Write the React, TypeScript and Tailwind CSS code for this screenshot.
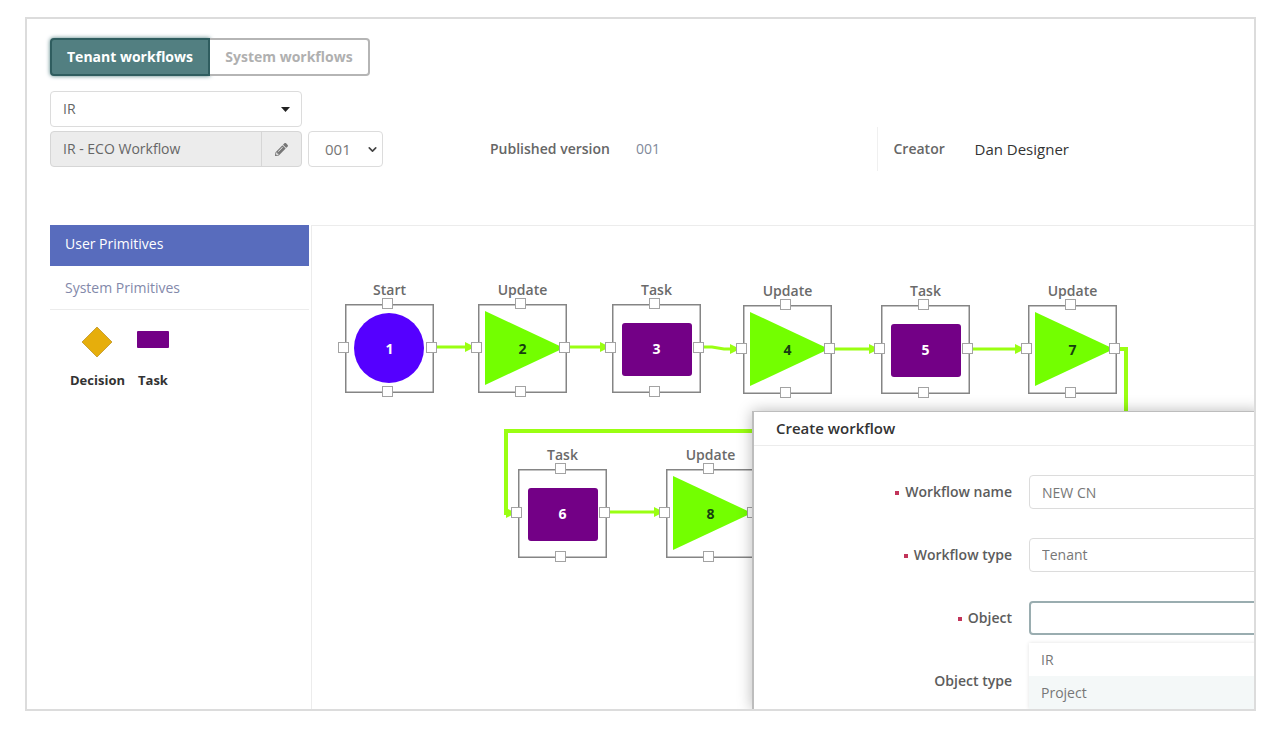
import { useState } from 'react';
import { FaPencilAlt } from 'react-icons/fa';
import { FiChevronDown } from 'react-icons/fi';

type NodeKind = 'start' | 'update' | 'task';

type FlowNode = {
  id: number;
  kind: NodeKind;
  label: string;
  x: number;
  y: number;
};

// Node positions on the canvas
const nodes: FlowNode[] = [
  { id: 1, kind: 'start', label: 'Start', x: 33, y: 78 },
  { id: 2, kind: 'update', label: 'Update', x: 166, y: 78 },
  { id: 3, kind: 'task', label: 'Task', x: 300, y: 78 },
  { id: 4, kind: 'update', label: 'Update', x: 431, y: 79 },
  { id: 5, kind: 'task', label: 'Task', x: 569, y: 79 },
  { id: 7, kind: 'update', label: 'Update', x: 716, y: 79 },
  { id: 6, kind: 'task', label: 'Task', x: 206, y: 243 },
  { id: 8, kind: 'update', label: 'Update', x: 354, y: 243 },
];

const edges = [
  'M119 121 H162',
  'M253 121 H296',
  'M386 121 H400 L412 123 H426',
  'M517 123 H565',
  'M655 123 H711',
  'M292 286 H349',
];

const arrows = [
  [163, 121],
  [298, 121],
  [428, 123],
  [567, 123],
  [713, 123],
  [204, 287],
  [352, 286],
];

const handles = [
  [42, -1],
  [-2, 43],
  [86, 43],
  [42, 87],
];

const NodeShape = ({ kind }: { kind: NodeKind }) => {
  if (kind === 'start') return <circle cx="44" cy="44" r="35" fill="#5500ff" />;
  if (kind === 'update') return <path d="M7 7 L86 44 L7 81 Z" fill="#73ff00" />;
  return <rect x="10" y="19" width="70" height="53" rx="3" fill="#730086" />;
};

const CanvasNode = ({ node }: { node: FlowNode }) => (
  <div className="absolute size-[89px]" style={{ left: node.x, top: node.y }}>
    <svg className="absolute inset-0 overflow-visible" width="89" height="89" aria-hidden="true">
      <rect x="0.75" y="0.75" width="87.5" height="87.5" fill="none" stroke="#858585" strokeWidth="1.5" />
      <NodeShape kind={node.kind} />
      {handles.map(([x, y]) => (
        <rect key={`${x}-${y}`} x={x - 4.5} y={y - 4.5} width="10" height="10" fill="#fff" stroke="#a3a3a3" />
      ))}
    </svg>
    <span className="absolute inset-x-0 -top-6 text-center text-sm font-semibold leading-5 text-[#6a6a6a]">
      {node.label}
    </span>
    <span
      className={`absolute inset-0 flex items-center justify-center text-sm font-bold ${
        node.kind === 'update' ? 'text-[#163f10]' : 'text-white'
      }`}
    >
      {node.id}
    </span>
  </div>
);

const Canvas = () => (
  <section aria-label="Workflow canvas" className="relative min-w-0 flex-1 overflow-hidden border-l border-t border-[#ececec]">
    <svg className="absolute inset-0 size-full" fill="none" aria-hidden="true">
      <g stroke="#9aff12" strokeWidth="3">
        {edges.map((d) => (
          <path key={d} d={d} />
        ))}
        <path d="M802 123 H814 V205 H194 V287 H200" strokeWidth="4" />
      </g>
      {arrows.map(([x, y]) => (
        <path key={`${x}-${y}`} d={`M${x - 10} ${y - 5} L${x} ${y} L${x - 10} ${y + 5} Z`} fill="#9aff12" />
      ))}
    </svg>
    {nodes.map((node) => (
      <CanvasNode key={node.id} node={node} />
    ))}
  </section>
);

const Required = () => <span className="mr-1.5 inline-block size-1 bg-[#c2345a] align-middle" />;

const labelClass = 'w-[258px] shrink-0 text-right text-sm font-semibold text-[#5c5c5c]';
const fieldClass = 'h-[34px] min-w-0 flex-1 appearance-none rounded border border-[#dcdcdc] bg-white px-3 text-sm text-[#777] outline-none';

const CreateDialog = () => {
  const [name, setName] = useState('NEW CN');
  const [object, setObject] = useState('');

  return (
    <div
      role="dialog"
      aria-labelledby="dialog-title"
      className="absolute -right-2 bottom-0 left-[725px] top-[392px] border-l-2 border-t border-[#bdbdbd] bg-white shadow-[0_0_14px_rgba(0,0,0,0.28)]"
    >
      <h2
        id="dialog-title"
        className="h-[34px] border-b border-[#ececec] px-[22px] text-[15px] font-semibold leading-8 text-[#333]"
      >
        Create workflow
      </h2>
      <form className="flex flex-col gap-[29px] pt-[29px]">
        <div className="flex items-center gap-[17px]">
          <label htmlFor="wf-name" className={labelClass}>
            <Required />
            Workflow name
          </label>
          <input id="wf-name" className={fieldClass} value={name} onChange={(e) => setName(e.target.value)} />
        </div>
        <div className="flex items-center gap-[17px]">
          <label htmlFor="wf-type" className={labelClass}>
            <Required />
            Workflow type
          </label>
          <select id="wf-type" className={fieldClass}>
            <option>Tenant</option>
            <option>System</option>
          </select>
        </div>
        <div className="flex items-center gap-[17px]">
          <label htmlFor="wf-object" className={labelClass}>
            <Required />
            Object
          </label>
          <div className="relative flex min-w-0 flex-1">
            <input
              id="wf-object"
              role="combobox"
              aria-expanded="true"
              aria-controls="object-options"
              className="h-[34px] w-full rounded border-2 border-[#9aadb0] bg-white px-3 text-sm text-[#777] outline-none"
              value={object}
              onChange={(e) => setObject(e.target.value)}
            />
            <ul
              id="object-options"
              role="listbox"
              className="absolute inset-x-0 top-full z-10 mt-2 bg-white text-sm leading-[33px] text-[#777] shadow-[0_0_4px_rgba(0,0,0,0.12)]"
            >
              <li role="option" aria-selected={object === 'IR'} className="px-3" onClick={() => setObject('IR')}>
                IR
              </li>
              <li
                role="option"
                aria-selected={object === 'Project'}
                className="bg-[#f4f8f8] px-3"
                onClick={() => setObject('Project')}
              >
                Project
              </li>
            </ul>
          </div>
        </div>
        <div className="flex items-center gap-[17px]">
          <label htmlFor="wf-object-type" className={labelClass}>
            Object type
          </label>
          <input id="wf-object-type" className={fieldClass} />
        </div>
      </form>
    </div>
  );
};

const Header = () => (
  <header className="flex flex-col pl-[23px] pt-[19px]">
    <div className="flex h-[38px] text-sm font-bold">
      <button className="w-40 rounded-l border-2 border-[#2f5d5f] bg-[#527f81] text-white shadow-[0_0_4px_#527f81]">
        Tenant workflows
      </button>
      <button className="w-40 rounded-r border-2 border-l-0 border-[#b5b5b5] bg-white text-[#b0b0b0]">
        System workflows
      </button>
    </div>
    <div className="mt-[15px] flex items-end">
      <div className="flex w-[333px] shrink-0 flex-col gap-1">
        <div className="relative w-[252px]">
          <select
            aria-label="Object"
            className="h-9 w-full appearance-none rounded border border-[#dcdcdc] bg-white px-3 text-sm text-[#666] outline-none"
          >
            <option>IR</option>
            <option>Project</option>
          </select>
          <svg className="pointer-events-none absolute right-3 top-4" width="9" height="5" aria-hidden="true">
            <path d="M0 0 H9 L4.5 5 Z" fill="#222" />
          </svg>
        </div>
        <div className="flex gap-1.5">
          <div className="flex h-9 w-[252px] rounded border border-[#d6d6d6] bg-[#ececec]">
            <input
              aria-label="Workflow"
              readOnly
              value="IR - ECO Workflow"
              className="min-w-0 flex-1 bg-transparent px-3 text-sm text-[#666] outline-none"
            />
            <button aria-label="Edit name" className="flex w-10 items-center justify-center border-l border-[#d6d6d6] text-[#777]">
              <FaPencilAlt size={13} />
            </button>
          </div>
          <div className="relative w-[75px]">
            <select
              aria-label="Version"
              className="h-9 w-full appearance-none rounded border border-[#dcdcdc] bg-white pl-4 text-[15px] text-[#777] outline-none"
            >
              <option>001</option>
            </select>
            <FiChevronDown className="pointer-events-none absolute right-1 top-3 text-[#444]" size={13} strokeWidth={3} />
          </div>
        </div>
      </div>
      <dl className="ml-[107px] flex flex-1 text-sm leading-9">
        <div className="flex shrink grow basis-[386px]">
          <dt className="w-[146px] font-semibold text-[#666]">Published version</dt>
          <dd className="text-[#81899a]">001</dd>
        </div>
        <div className="-mt-1 -mb-1 flex shrink grow basis-[377px] border-l border-[#f0f0f0] py-1 pl-4">
          <dt className="w-[81px] font-semibold text-[#666]">Creator</dt>
          <dd className="text-[15px] text-[#333]">Dan Designer</dd>
        </div>
      </dl>
    </div>
  </header>
);

const Sidebar = () => (
  <aside className="w-[261px] shrink-0 pr-0.5 text-sm">
    <nav className="flex flex-col">
      <button className="h-[41px] bg-[#586cbd] px-[15px] pb-1 text-left font-medium text-white">User Primitives</button>
      <button className="h-11 border-b border-[#ececec] px-[15px] text-left text-[#8389aa]">System Primitives</button>
    </nav>
    <div className="flex gap-3 px-5 pt-4 text-[13px] font-bold text-[#333]">
      <button className="flex flex-col items-center">
        <svg width="32" height="32" aria-hidden="true">
          <path d="M16 1 L31 16 L16 31 L1 16 Z" fill="#e6ae0c" stroke="#c9a23a" />
        </svg>
        <span className="mt-3 leading-5">Decision</span>
      </button>
      <button className="flex flex-col items-center">
        <svg width="32" height="32" aria-hidden="true">
          <rect y="5" width="32" height="17" rx="1" fill="#730086" />
        </svg>
        <span className="mt-3 leading-5">Task</span>
      </button>
    </div>
  </aside>
);

export default function App() {
  return (
    <div className="flex min-h-screen flex-col bg-white pt-[17px] pr-[26px] pb-[21px] pl-[25px] font-['Open_Sans','Noto_Sans',sans-serif]">
      <main className="relative flex flex-1 flex-col overflow-hidden border-2 border-[#dcdcdc]">
        <Header />
        <div className="mt-[58px] flex flex-1 pl-[23px]">
          <Sidebar />
          <Canvas />
        </div>
        <CreateDialog />
      </main>
    </div>
  );
}
